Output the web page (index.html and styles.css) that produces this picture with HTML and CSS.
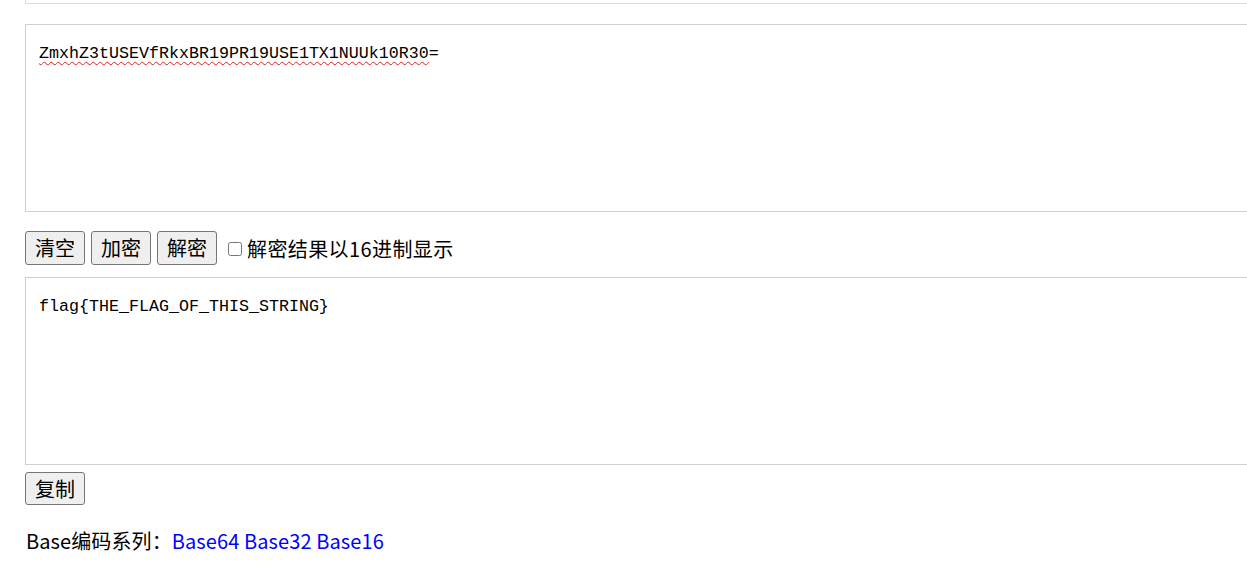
FILE: index.html
```html
<!DOCTYPE html>
<html lang="zh-CN">
<head>
<meta charset="utf-8">
<title>Base64 编码解码</title>
<link rel="stylesheet" href="styles.css">
</head>
<body>
<div class="page">
  <div class="remnant"></div>
  <div class="box input-box"><span class="misspelled">ZmxhZ3tUSEVfRkxBR19PR19USE1TX1NUUk10R30</span>=</div>
  <div class="controls">
    <button class="btn">清空</button>
    <button class="btn">加密</button>
    <button class="btn">解密</button>
    <label class="hex"><input type="checkbox" class="check"><span class="hex-text">解密结果以16进制显示</span></label>
  </div>
  <div class="box output-box">flag{THE_FLAG_OF_THIS_STRING}</div>
  <div class="copy-row"><button class="btn">复制</button></div>
  <p class="series">Base编码系列：<a href="#">Base64</a> <a href="#">Base32</a> <a href="#">Base16</a></p>
</div>
</body>
</html>
```
FILE: styles.css
```css
html, body {
  margin: 0;
  padding: 0;
  background: #fff;
  overflow: hidden;
}

body {
  font-family: "Noto Sans CJK SC", "Noto Sans", sans-serif;
  font-size: 20px;
  color: #000;
}

.page {
  padding-left: 25px;
  width: 1300px;
}

.remnant {
  height: 3px;
  border-left: 1px solid #dcdcdc;
  border-bottom: 1px solid #dcdcdc;
  margin-bottom: 20px;
}

.box {
  box-sizing: border-box;
  height: 188px;
  border: 1px solid #cfcfcf;
  padding: 19px 13px 0;
  font-family: "Liberation Mono", monospace;
  font-size: 16.67px;
  line-height: 20px;
  color: #000;
  white-space: pre;
}

.misspelled {
  text-decoration: underline wavy #e02020;
  text-decoration-thickness: 1px;
  text-underline-offset: 3px;
  text-decoration-skip-ink: none;
}

.controls {
  display: flex;
  align-items: center;
  gap: 6px;
  margin-top: 19px;
  margin-bottom: 12px;
  height: 34px;
}

.btn {
  box-sizing: border-box;
  height: 34px;
  padding: 0 9px;
  border: 1px solid #767676;
  border-radius: 3px;
  background: #efefef;
  font-family: "Noto Sans CJK SC", "Noto Sans", sans-serif;
  font-size: 20px;
  line-height: 30px;
  color: #000;
}

.hex {
  display: flex;
  align-items: center;
  margin-left: 5px;
}

.check {
  width: 14px;
  height: 14px;
  margin: 1px 5px 0 0;
}

.hex-text {
  letter-spacing: 0.4px;
}

.copy-row {
  display: flex;
  margin-top: 7px;
}

.copy-row .btn {
  height: 33px;
  line-height: 29px;
}

.series {
  margin: 21px 0 0 1px;
  line-height: 29px;
  letter-spacing: 0.1px;
}

.series a {
  color: #0000ff;
  text-decoration: none;
}
```
